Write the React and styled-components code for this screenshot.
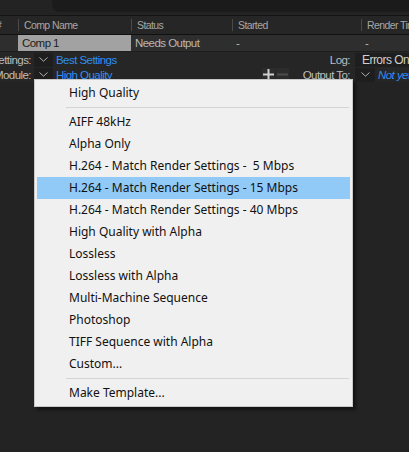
import styled, { createGlobalStyle } from "styled-components";

const GlobalStyle = createGlobalStyle`
  html, body {
    margin: 0;
    padding: 0;
    background: #232323;
  }
  body {
    font-family: "Liberation Sans", Arial, sans-serif;
  }
`;

const menuItems = [
  { label: "High Quality" },
  { separator: true },
  { label: "AIFF 48kHz" },
  { label: "Alpha Only" },
  { label: "H.264 - Match Render Settings -  5 Mbps" },
  { label: "H.264 - Match Render Settings - 15 Mbps", active: true },
  { label: "H.264 - Match Render Settings - 40 Mbps" },
  { label: "High Quality with Alpha" },
  { label: "Lossless" },
  { label: "Lossless with Alpha" },
  { label: "Multi-Machine Sequence" },
  { label: "Photoshop" },
  { label: "TIFF Sequence with Alpha" },
  { label: "Custom..." },
  { separator: true },
  { label: "Make Template..." },
];

const Chevron = () => (
  <svg width="9" height="5" viewBox="0 0 9 5">
    <path d="M0.5 0.5 L4.5 4.2 L8.5 0.5" fill="none" stroke="#b0b0b0" strokeWidth="1" />
  </svg>
);

const App = () => {
  return (
    <>
      <GlobalStyle />
      <Page>
        <TopBar>
          <TabShape />
        </TopBar>
        <HeaderRow>
          <HeadCell $hash>#</HeadCell>
          <HeadCell $sep>Comp Name</HeadCell>
          <HeadCell $sep>Status</HeadCell>
          <HeadCell $sep>Started</HeadCell>
          <HeadCell $sep>Render Time</HeadCell>
        </HeaderRow>
        <QueueRow>
          <Cell />
          <Cell $selected>Comp 1</Cell>
          <Cell>Needs Output</Cell>
          <Cell>-</Cell>
          <Cell>-</Cell>
        </QueueRow>
        <SettingsRow>
          <Label>Render Settings:</Label>
          <Drop>
            <Chevron />
          </Drop>
          <Link>Best Settings</Link>
          <RightPart>
            <RightLabels>
              <RightLabel>Log:</RightLabel>
            </RightLabels>
            <ValueBox>Errors Only</ValueBox>
          </RightPart>
        </SettingsRow>
        <SettingsRow>
          <Label>Output Module:</Label>
          <Drop>
            <Chevron />
          </Drop>
          <Link>High Quality</Link>
          <RightPart>
            <RightLabels>
              <PlusMinus>
                <SquareBtn>
                  <svg width="11" height="11" viewBox="0 0 11 11">
                    <path d="M5.5 0 V11 M0 5.5 H11" stroke="#cfcfcf" strokeWidth="2" />
                  </svg>
                </SquareBtn>
                <SquareBtn>
                  <svg width="11" height="11" viewBox="0 0 11 11">
                    <path d="M0 5.5 H11" stroke="#4c4c4c" strokeWidth="2" />
                  </svg>
                </SquareBtn>
              </PlusMinus>
              <RightLabel>Output To:</RightLabel>
            </RightLabels>
            <ValueGroup>
              <Drop $wide>
                <Chevron />
              </Drop>
              <Link $italic>Not yet specified</Link>
            </ValueGroup>
          </RightPart>
        </SettingsRow>

        <Menu>
          {menuItems.map((item, i) =>
            item.separator ? (
              <Separator key={i} />
            ) : (
              <Item key={i} $active={item.active}>
                {item.label}
              </Item>
            )
          )}
        </Menu>
      </Page>
    </>
  );
};

const Page = styled.div`
  position: relative;
  width: 409px;
  height: 452px;
  overflow: hidden;
  background: #232323;
  color: #b5b5b5;
  font-family: "Liberation Sans", Arial, sans-serif;
  font-size: 11.5px;
  letter-spacing: -0.55px;
`;

const TopBar = styled.div`
  height: 15px;
  display: flex;
  justify-content: flex-end;
  background: #232323;
  border-bottom: 1px solid #141414;
`;

const TabShape = styled.div`
  width: 357px;
  height: 12px;
  background: #1b1b1b;
  border-bottom-left-radius: 8px;
`;

const grid = `
  display: grid;
  grid-template-columns: 18px 113px 101px 129px 1fr;
`;

const HeaderRow = styled.div`
  ${grid}
  height: 18px;
  background: #262626;
  border-bottom: 1px solid #101010;
`;

const HeadCell = styled.div`
  display: flex;
  align-items: center;
  padding-left: ${(p) => (p.$hash ? "0" : "5px")};
  margin-left: ${(p) => (p.$hash ? "-4px" : "0")};
  font-size: 10.5px;
  letter-spacing: -0.6px;
  color: #a6a6a6;
  white-space: nowrap;
  overflow: hidden;
  border-left: ${(p) => (p.$sep ? "1px solid #4a4a4a" : "none")};
  height: 12px;
  margin-top: 3px;
  line-height: 12px;
`;

const QueueRow = styled.div`
  ${grid}
  height: 16px;
  background: #2e2e2e;
  border-bottom: 1px solid #1e1e1e;
`;

const Cell = styled.div`
  display: flex;
  align-items: center;
  padding-left: 4px;
  white-space: nowrap;
  overflow: hidden;
  background: ${(p) => (p.$selected ? "#a2a2a2" : "transparent")};
  color: ${(p) => (p.$selected ? "#1c1c1c" : "#b8b8b8")};
`;

const SettingsRow = styled.div`
  display: flex;
  align-items: center;
  height: 15px;
  background: #262626;
  white-space: nowrap;
`;

const Label = styled.div`
  width: 31px;
  display: flex;
  justify-content: flex-end;
  overflow: hidden;
  color: #bdbdbd;
  margin-right: 3px;
  flex-shrink: 0;
`;

const Drop = styled.div`
  width: ${(p) => (p.$wide ? "20px" : "19px")};
  height: 14px;
  display: flex;
  align-items: center;
  justify-content: center;
  background: #1e1e1e;
  margin-right: 3px;
  flex-shrink: 0;
`;

const Link = styled.div`
  color: #2e8ef0;
  font-style: ${(p) => (p.$italic ? "italic" : "normal")};
  flex: 1;
`;

const RightPart = styled.div`
  width: 147px;
  flex-shrink: 0;
  display: grid;
  grid-template-columns: 1fr 54px;
  column-gap: 5px;
  align-items: center;
  height: 15px;
`;

const RightLabels = styled.div`
  display: flex;
  align-items: center;
  justify-content: space-between;
`;

const RightLabel = styled.div`
  color: #bdbdbd;
  margin-left: auto;
`;

const ValueBox = styled.div`
  height: 14px;
  background: #1e1e1e;
  color: #d0d0d0;
  padding-left: 7px;
  line-height: 14px;
  overflow: hidden;
  font-size: 12px;
`;

const ValueGroup = styled.div`
  display: flex;
  align-items: center;
  overflow: hidden;
`;

const PlusMinus = styled.div`
  display: flex;
  gap: 1px;
`;

const SquareBtn = styled.div`
  width: 13px;
  height: 14px;
  display: flex;
  align-items: center;
  justify-content: center;
  background: #2c2c2c;
`;

const Menu = styled.div`
  position: absolute;
  left: 34px;
  top: 79px;
  width: 313px;
  padding: 2px;
  background: #f0f0f0;
  border: 1px solid #c9c9c9;
  box-shadow: 3px 3px 3px rgba(0, 0, 0, 0.45);
  font-family: "Noto Sans", "Liberation Sans", sans-serif;
  letter-spacing: 0;
`;

const Item = styled.div`
  height: 22px;
  line-height: 22px;
  padding-left: 32px;
  font-size: 12px;
  color: #111;
  white-space: pre;
  background: ${(p) => (p.$active ? "#91c9f7" : "transparent")};
`;

const Separator = styled.div`
  height: 1px;
  margin: 3px 1px 3px 29px;
  background: #d4d4d4;
`;

export default App;
